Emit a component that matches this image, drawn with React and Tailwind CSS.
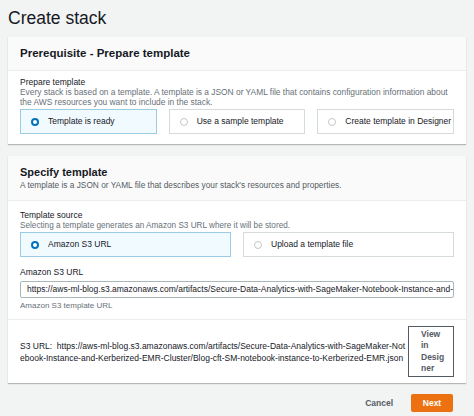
import React from "react";

const Radio = ({ checked }) => (
    <span
        className={`inline-block w-[8px] h-[8px] rounded-full shrink-0 ${checked ? "border-[2.5px] border-[#0073bb] bg-white" : "border border-[#c6c6c6] bg-white"}`}
    />
);

const Tile = ({ label, checked, className = "" }) => (
    <div
        className={`flex items-center gap-[9px] pl-[10px] h-[25px] border ${checked ? "border-[#9ccbe5] bg-[#f1faff]" : "border-[#d5dbdb] bg-white"} ${className}`}
    >
        <Radio checked={checked} />
        <span className="text-[8.5px] text-[#16191f]">{label}</span>
    </div>
);

const App = () => {
    const s3 =
        "https://aws-ml-blog.s3.amazonaws.com/artifacts/Secure-Data-Analytics-with-SageMaker-Notebook-Instance-and-Kerberized-EMR-Cluster/Blog-cft-SM-notebook-instance-to-Kerberized-EMR.json";

    return (
        <div className="w-[474px] h-[416px] bg-[#f2f3f3] overflow-hidden font-['Liberation_Sans',Arial,sans-serif] text-[#16191f]">
            <h1 className="pl-[8px] pt-[6px] h-[37px] text-[17.5px] leading-[24px] text-[#16191f]">Create stack</h1>

            {/* Prerequisite */}
            <section className="mx-[8px] bg-white shadow-[0_1px_1px_rgba(0,0,0,0.25)]">
                <div className="h-[34px] bg-[#fafafa] border-b border-[#eaeded] px-[12px] flex items-center">
                    <h2 className="font-bold text-[11.5px]">Prerequisite - Prepare template</h2>
                </div>
                <div className="px-[12px] pt-[6px] pb-[10px]">
                    <p className="text-[8.5px] leading-[11px]">Prepare template</p>
                    <p className="text-[8.4px] leading-[9.5px] text-[#687078]">
                        Every stack is based on a template. A template is a JSON or YAML file that contains configuration information about the AWS resources you want to include in the stack.
                    </p>
                    <div className="grid grid-cols-3 gap-[12px] mt-[2px]">
                        <Tile label="Template is ready" checked />
                        <Tile label="Use a sample template" />
                        <Tile label="Create template in Designer" />
                    </div>
                </div>
            </section>

            {/* Specify template */}
            <section className="mx-[8px] mt-[12px] bg-white shadow-[0_1px_1px_rgba(0,0,0,0.25)]">
                <div className="h-[45px] bg-[#fafafa] border-b border-[#eaeded] px-[12px] pt-[10px]">
                    <h2 className="font-bold text-[11px] leading-[13px]">Specify template</h2>
                    <p className="text-[8.3px] leading-[12px] text-[#545b64]">
                        A template is a JSON or YAML file that describes your stack's resources and properties.
                    </p>
                </div>
                <div className="px-[12px] pt-[9px] pb-[8px] border-b border-[#eaeded]">
                    <p className="text-[8.5px] leading-[11px]">Template source</p>
                    <p className="text-[8.2px] leading-[10px] text-[#687078]">
                        Selecting a template generates an Amazon S3 URL where it will be stored.
                    </p>
                    <div className="grid grid-cols-2 gap-[12px] mt-[1px]">
                        <Tile label="Amazon S3 URL" checked className="h-[23px]" />
                        <Tile label="Upload a template file" className="h-[23px]" />
                    </div>
                    <p className="text-[8.5px] leading-[11px] mt-[10px]">Amazon S3 URL</p>
                    <div className="mt-[3px] h-[17px] border border-[#aab7b8] rounded-[2px] px-[6px] flex items-center overflow-hidden">
                        <span className="text-[8.5px] whitespace-nowrap">{s3.slice(0, 106)}</span>
                    </div>
                    <p className="text-[8px] leading-[10px] mt-[3px] text-[#687078]">Amazon S3 template URL</p>
                </div>
                <div className="px-[12px] py-[6px] flex items-center gap-[3px]">
                    <p className="flex-1 text-[8.5px] leading-[12px] break-all">
                        S3 URL:&nbsp;&nbsp;{s3}
                    </p>
                    <button className="w-[46px] h-[51px] border border-[#545b64] pl-[12px] text-left text-[8.5px] leading-[11.5px] font-bold text-[#545b64]">
                        View<br />in<br />Desig<br />ner
                    </button>
                </div>
            </section>

            <div className="flex justify-end items-center gap-[18px] pr-[21px] mt-[11px]">
                <span className="text-[8.5px] font-bold text-[#545b64]">Cancel</span>
                <button className="w-[42px] h-[18px] bg-[#ec7211] text-white text-[8.5px] font-bold rounded-[2px]">Next</button>
            </div>
        </div>
    );
};

export default App;
